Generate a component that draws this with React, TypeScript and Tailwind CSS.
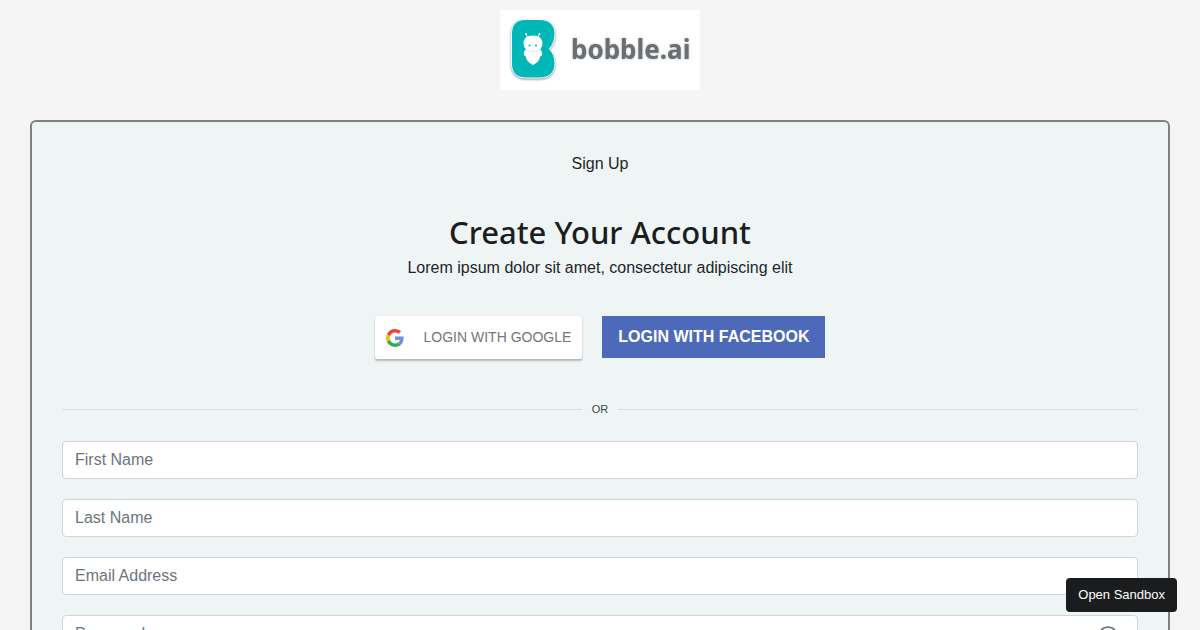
import { useState } from "react";
import { Eye, EyeOff } from "lucide-react";

const fields = [
  { id: "firstName", label: "First Name", type: "text" },
  { id: "lastName", label: "Last Name", type: "text" },
  { id: "email", label: "Email Address", type: "email" },
] as const;

const inputClass =
  "block h-[38px] w-full rounded border border-[#ced4da] bg-white px-3 text-base text-[#212529] outline-none placeholder:text-[#6c757d] focus:border-[#80bdff]";

function Logo() {
  return (
    <div className="flex h-20 w-[200px] items-center bg-white pl-2">
      <svg viewBox="0 0 56 80" className="h-20 w-14 shrink-0" aria-hidden="true">
        <path
          d="M17 9.500h15c9 0 15 5.500 15 14 0 7-2 10.500-5.500 15.500 3.500 4 5.500 8 5.500 14.500 0 9-6 14.500-15 14.500H18c-9 0-14.500-5-14.500-14V23.500c0-9 5-14 13.500-14z"
          fill="#00b7b7"
          stroke="#fff"
          strokeWidth="1"
          className="drop-shadow-[0_1px_1px_rgba(0,0,0,0.45)]"
        />
        <g fill="#fff">
          <path d="M18 23.500l1.500 4M31.500 23.500l-1.500 4" stroke="#fff" strokeWidth="1" />
          <circle cx="18" cy="24" r="1" />
          <circle cx="31.500" cy="24" r="1" />
          <path d="M25 25.500c6 0 9.500 3 9.500 7.500 0 3-1 5-2.500 6.500 1.500 1 2.200 2.500 2.200 4 0 2-1 2.700-2.200 3 .3 3.500-3.500 7-7 8.500-3.500-1.500-7.300-5-7-8.500-1.200-.3-2.200-1-2.200-3 0-1.500.7-3 2.200-4-1.500-1.500-2.500-3.500-2.500-6.500 0-4.500 3.500-7.500 9.500-7.500z" />
        </g>
        <circle cx="21.500" cy="35.500" r="1" fill="#00b7b7" />
        <circle cx="28" cy="35.500" r="1" fill="#00b7b7" />
        <path d="M18 40.500c4 1.500 10 1.500 14 0" fill="none" stroke="#b5e6e6" strokeWidth="0.600" />
      </svg>
      <span className="ml-[7px] pb-[2px] font-['Noto_Sans',sans-serif] text-[26px] leading-9 font-bold text-[#6d6e71] drop-shadow-[0_0_1px_rgba(90,120,120,0.5)]">
        bobble.ai
      </span>
    </div>
  );
}

function GoogleIcon() {
  return (
    <svg viewBox="0 0 48 48" className="h-[18px] w-[18px] shrink-0" aria-hidden="true">
      <path fill="#EA4335" d="M24 9.500c3.540 0 6.710 1.220 9.210 3.600l6.850-6.850C35.900 2.380 30.470 0 24 0 14.620 0 6.510 5.380 2.560 13.220l7.980 6.190C12.430 13.720 17.740 9.500 24 9.500z" />
      <path fill="#6f93d6" d="M46.980 24.550c0-1.570-.15-3.090-.38-4.550H24v9.020h12.940c-.58 2.960-2.260 5.480-4.780 7.180l7.730 6c4.510-4.180 7.090-10.360 7.090-17.650z" />
      <path fill="#FBBC05" d="M10.530 28.590c-.48-1.450-.76-2.990-.76-4.590s.27-3.140.76-4.590l-7.980-6.190C.92 16.460 0 20.120 0 24s.92 7.540 2.560 10.780l7.970-6.190z" />
      <path fill="#34A853" d="M24 48c6.480 0 11.930-2.130 15.890-5.810l-7.730-6c-2.150 1.450-4.920 2.300-8.160 2.300-6.260 0-11.570-4.220-13.470-9.910l-7.980 6.190C6.510 42.620 14.620 48 24 48z" />
    </svg>
  );
}

export default function App() {
  const [showPassword, setShowPassword] = useState(false);

  return (
    <div className="min-h-screen bg-[#f5f5f5] pb-8 font-['Liberation_Sans',Arial,sans-serif] text-base text-[#212529]">
      <header className="flex justify-center pt-[10px]">
        <Logo />
      </header>

      <main className="mx-[30px] mt-[30px] rounded-md border-2 border-[#808080] bg-[#eff5f5] p-[30px]">
        <p className="text-center">Sign Up</p>

        <div className="mt-9 text-center">
          <h1 className="font-['Noto_Sans',sans-serif] text-[31px] leading-10 font-medium text-[#1b1d1f]">
            Create Your Account
          </h1>
          <p className="mt-1">Lorem ipsum dolor sit amet, consectetur adipiscing elit</p>
        </div>

        <div className="mt-9 flex flex-wrap items-start justify-center gap-5">
          <button
            type="button"
            className="flex h-[43px] items-center gap-5 rounded-xs bg-white px-[11px] text-sm text-[#757575] shadow-[0_2px_2px_0_rgba(0,0,0,0.24),0_0_1px_0_rgba(0,0,0,0.24)]"
          >
            <GoogleIcon />
            <span className="pb-[2px]">LOGIN WITH GOOGLE</span>
          </button>
          <button type="button" className="h-[42px] bg-[#4c69ba] px-4 text-base font-bold text-white">
            LOGIN WITH FACEBOOK
          </button>
        </div>

        <div className="mt-10 flex items-center gap-[10px] text-[11px] leading-[21px] text-[#444]">
          <span className="h-px flex-1 bg-[#d5dcde]" />
          OR
          <span className="h-px flex-1 bg-[#d5dcde]" />
        </div>

        <form className="mt-[21px] space-y-5" onSubmit={(event) => event.preventDefault()}>
          {fields.map((field) => (
            <input
              key={field.id}
              id={field.id}
              type={field.type}
              aria-label={field.label}
              placeholder={field.label}
              className={inputClass}
            />
          ))}
          <div className="relative">
            <input
              id="password"
              type={showPassword ? "text" : "password"}
              aria-label="Password"
              placeholder="Password"
              className={inputClass}
            />
            <button
              type="button"
              aria-label="Show password"
              onClick={() => setShowPassword((value) => !value)}
              className="absolute top-2 right-5 text-[#6c757d]"
            >
              {showPassword ? <EyeOff className="h-5 w-5" /> : <Eye className="h-5 w-5" />}
            </button>
          </div>
        </form>
      </main>

      <a
        href="#sandbox"
        className="fixed right-[23px] bottom-[18px] flex h-[34px] items-center rounded bg-[#1b1c1e] px-3 text-[13px] text-white"
      >
        Open Sandbox
      </a>
    </div>
  );
}
